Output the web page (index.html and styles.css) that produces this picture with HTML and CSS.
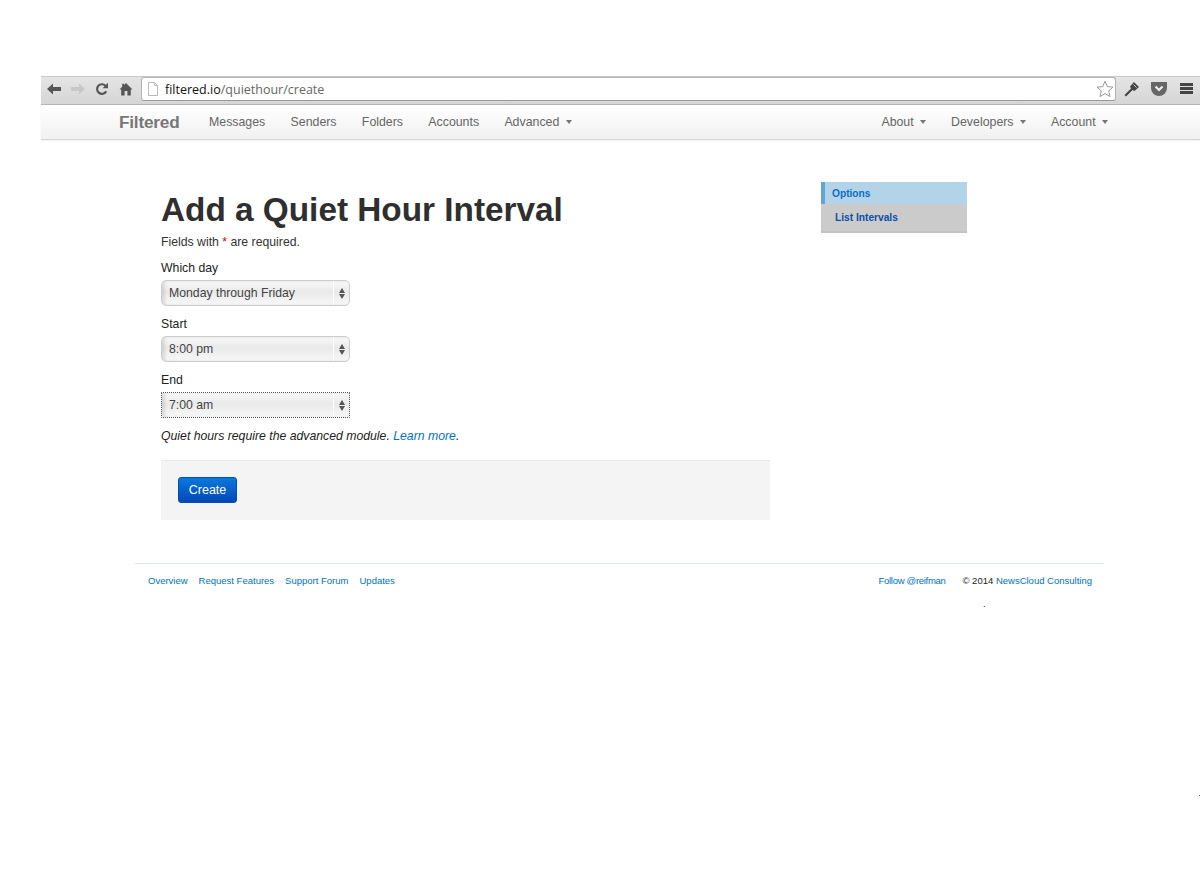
FILE: index.html
```html
<!DOCTYPE html>
<html lang="en">
<head>
    <meta charset="UTF-8">
    <title>Filtered - Add a Quiet Hour Interval</title>
    <link rel="stylesheet" href="styles.css">
</head>
<body>
    <div class="browser">
        <!-- Browser toolbar -->
        <div class="toolbar">
            <div class="tool-btns">
                <svg class="tool-icon" viewBox="0 0 16 16"><path d="M1 8 L7 2.5 V6 H15 V10 H7 V13.5 Z" fill="#555"/></svg>
                <svg class="tool-icon" viewBox="0 0 16 16"><path d="M15 8 L9 2.5 V6 H1 V10 H9 V13.5 Z" fill="#c8c8c8"/></svg>
                <svg class="tool-icon" viewBox="0 0 16 16"><path d="M12.2 10.2 A4.8 4.8 0 1 1 11.6 5" fill="none" stroke="#555" stroke-width="2.2"/><path d="M14 1.8 V7.2 H8.6 Z" fill="#555"/></svg>
                <svg class="tool-icon" viewBox="0 0 16 16"><path d="M8 2 L14.5 8.4 H12.8 V14.5 H9.4 V10 H6.6 V14.5 H3.2 V8.4 H1.5 L4.2 5.7 V2.8 H6 V4 Z" fill="#555"/></svg>
            </div>
            <div class="address-bar">
                <svg class="page-icon" viewBox="0 0 12 14"><path d="M1.5 .5 H7.5 L10.5 3.5 V13.5 H1.5 Z M7.5 .5 V3.5 H10.5" fill="#fff" stroke="#bbb"/></svg>
                <span class="url"><span class="url-host">filtered.io</span>/quiethour/create</span>
                <svg class="star-icon" viewBox="0 0 18 18"><path d="M9 1.2 L11.3 6.6 L17 7.1 L12.7 10.9 L14 16.6 L9 13.6 L4 16.6 L5.3 10.9 L1 7.1 L6.7 6.6 Z" fill="#fff" stroke="#999" stroke-width="1"/></svg>
            </div>
            <div class="ext-btns">
                <svg class="ext-wrench" viewBox="0 0 18 18"><path d="M1.5 15 L8 8.5 L7 6.5 L11 2 L16 7 L11.5 11 L9.5 10 L3 16.5 Z" fill="#444"/><path d="M10.5 4.5 L13.5 7.5" stroke="#ccc" stroke-width="1"/></svg>
                <svg class="ext-pocket" viewBox="0 0 18 16"><path d="M1 1 H17 V7 A8 8 0 0 1 1 7 Z" fill="#666"/><path d="M5.5 5.5 L9 9 L12.5 5.5" fill="none" stroke="#eee" stroke-width="2.2"/></svg>
                <div class="menu-icon"><i></i><i></i><i></i></div>
            </div>
        </div>

        <!-- Site navigation -->
        <nav class="navbar">
            <a class="brand" href="#">Filtered</a>
            <ul class="nav">
                <li><a href="#">Messages</a></li>
                <li><a href="#">Senders</a></li>
                <li><a href="#">Folders</a></li>
                <li><a href="#">Accounts</a></li>
                <li><a href="#">Advanced <b class="caret"></b></a></li>
            </ul>
            <ul class="nav nav-right">
                <li><a href="#">About <b class="caret"></b></a></li>
                <li><a href="#">Developers <b class="caret"></b></a></li>
                <li><a href="#">Account <b class="caret"></b></a></li>
            </ul>
        </nav>

        <div class="content">
            <main class="main-col">
                <h1>Add a Quiet Hour Interval</h1>
                <p class="note">Fields with <span class="required">*</span> are required.</p>
                <form>
                    <label for="day">Which day</label>
                    <div class="select-wrap">
                        <select id="day"><option>Monday through Friday</option></select>
                        <span class="select-arrows"></span>
                    </div>
                    <label for="start">Start</label>
                    <div class="select-wrap">
                        <select id="start"><option>8:00 pm</option></select>
                        <span class="select-arrows"></span>
                    </div>
                    <label for="end">End</label>
                    <div class="select-wrap focused">
                        <select id="end"><option>7:00 am</option></select>
                        <span class="select-arrows"></span>
                    </div>
                    <p class="hint"><em>Quiet hours require the advanced module. <a href="#">Learn more</a>.</em></p>
                    <div class="form-actions">
                        <button type="button" class="btn-primary">Create</button>
                    </div>
                </form>
            </main>
            <aside class="sidebar">
                <div class="side-head">Options</div>
                <a class="side-link" href="#">List Intervals</a>
            </aside>
        </div>

        <footer class="site-footer">
            <div class="footer-links">
                <a href="#">Overview</a>
                <a href="#">Request Features</a>
                <a href="#">Support Forum</a>
                <a href="#">Updates</a>
            </div>
            <div class="footer-right">
                <a class="follow" href="#">Follow @reifman</a>
                <span>© 2014 <a href="#">NewsCloud Consulting</a></span>
            </div>
        </footer>
        <div class="stray-dot">.</div>
    </div>
    <i class="edge-speck"></i>
</body>
</html>
```
FILE: styles.css
```css
* {
  margin: 0;
  padding: 0;
  box-sizing: border-box;
}

body {
  font-family: "Liberation Sans", Arial, sans-serif;
  font-size: 12.25px;
  color: #333;
  background: #fff;
  height: 872px;
  overflow: hidden;
  position: relative;
}

a {
  color: #0072c6;
  text-decoration: none;
}

.browser {
  margin: 76px 0 0 41px;
  padding-top: 0.1px;
}

/* Toolbar */
.toolbar {
  height: 29px;
  display: flex;
  align-items: center;
  padding-bottom: 4px;
  background: linear-gradient(#e4e4e4, #d6d6d6);
  border-top: 1px solid #c9c9c9;
  border-bottom: 1px solid #b5b5b5;
}

.tool-btns {
  display: flex;
  gap: 8px;
  padding-left: 5px;
  width: 100px;
}

.tool-icon {
  width: 16px;
  height: 16px;
}

.address-bar {
  width: 975px;
  height: 24px;
  display: flex;
  align-items: center;
  background: #fff;
  border: 1px solid #b4b4b4;
  border-bottom-color: #999;
  border-radius: 3px;
  padding: 0 1px 0 5px;
}

.page-icon {
  width: 12px;
  height: 14px;
  margin-right: 6px;
}

.url {
  font-family: "Open Sans", "Noto Sans", sans-serif;
  font-size: 12.5px;
  color: #666;
  flex: 1;
  padding-top: 1px;
}

.url-host {
  color: #111;
}

.star-icon {
  width: 18px;
  height: 18px;
}

.ext-btns {
  display: flex;
  align-items: center;
  padding-left: 7px;
  gap: 9px;
}

.ext-wrench {
  width: 18px;
  height: 18px;
}

.ext-pocket {
  width: 18px;
  height: 16px;
}

.menu-icon {
  width: 13px;
  margin-left: 3px;
}

.menu-icon i {
  display: block;
  height: 3px;
  background: #444;
  margin-bottom: 1px;
}

/* Navbar */
.navbar {
  height: 35px;
  display: flex;
  align-items: center;
  padding-left: 78px;
  padding-right: 92px;
  background: linear-gradient(#fff, #f1f1f1);
  border-bottom: 1px solid #d4d4d4;
  box-shadow: 0 1px 2px rgba(0, 0, 0, 0.06);
}

.brand {
  font-size: 17.2px;
  font-weight: bold;
  color: #777;
  letter-spacing: -0.2px;
  width: 90px;
}

.nav {
  display: flex;
  list-style: none;
  gap: 25.3px;
}

.nav a {
  color: #666;
  font-size: 12.35px;
}

.nav-right {
  margin-left: auto;
  gap: 25px;
}

.caret {
  display: inline-block;
  width: 0;
  height: 0;
  margin-left: 3px;
  vertical-align: 2px;
  border-top: 4px solid #777;
  border-left: 3.5px solid transparent;
  border-right: 3.5px solid transparent;
}

/* Content */
.content {
  display: flex;
  padding: 42px 0 0 120px;
}

.main-col {
  width: 609px;
}

h1 {
  font-size: 33.35px;
  line-height: 38px;
  font-weight: bold;
  color: #2f2f2f;
  margin-top: 9px;
}

.note {
  margin-top: 5px;
  line-height: 16px;
}

.required {
  color: #e00000;
}

label {
  display: block;
  margin-top: 9px;
  line-height: 18px;
  color: #222;
}

.select-wrap {
  position: relative;
  width: 189px;
  height: 26px;
  margin-top: 3px;
}

.select-wrap select {
  appearance: none;
  -webkit-appearance: none;
  width: 100%;
  height: 100%;
  padding: 0 7px;
  font-family: inherit;
  font-size: 12.25px;
  color: #444;
  border: 1px solid #ccc;
  border-radius: 5px;
  background: linear-gradient(#f9f9f9, #e9e9e9 45%, #f8f8f8);
  box-shadow: inset 3px 0 3px rgba(0, 0, 0, 0.1);
}

.select-wrap.focused select {
  border: 1px dotted #555;
  border-radius: 1px;
  outline: none;
}

.select-arrows {
  position: absolute;
  top: 1px;
  right: 0;
  bottom: 1px;
  width: 17px;
  border-left: 1px solid #fff;
}

.select-arrows::before,
.select-arrows::after {
  content: "";
  position: absolute;
  left: 5px;
  border-left: 3.5px solid transparent;
  border-right: 3.5px solid transparent;
}

.select-arrows::before {
  top: 7px;
  border-bottom: 5px solid #555;
}

.select-arrows::after {
  top: 13px;
  border-top: 5px solid #555;
}

.hint {
  margin-top: 9px;
  line-height: 18px;
  color: #222;
}

.form-actions {
  margin-top: 15px;
  height: 60px;
  padding: 16px 17px;
  background: #f4f4f4;
  border-top: 1px solid #e8e8e8;
}

.btn-primary {
  display: block;
  width: 59px;
  height: 26px;
  font-family: inherit;
  font-size: 12.5px;
  color: #fff;
  border: 1px solid #0050b0;
  border-radius: 3px;
  background: linear-gradient(#0a78dc, #0048b8);
}

/* Sidebar */
.sidebar {
  width: 146px;
  margin-left: 51px;
  font-size: 10.2px;
  font-weight: bold;
  line-height: 23px;
}

.side-head {
  height: 22px;
  padding-left: 7px;
  color: #0a6fc4;
  background: #b3d4e8;
  border-left: 4px solid #62a6d2;
}

.side-link {
  display: block;
  height: 29px;
  line-height: 27px;
  padding-left: 14px;
  color: #0a50a8;
  background: #cbcbcb;
  border-bottom: 2px solid #c2c2c2;
}

/* Footer */
.site-footer {
  display: flex;
  justify-content: space-between;
  width: 969px;
  margin: 43px 0 0 94px;
  padding: 11px 12px 0 13px;
  border-top: 1px solid #dbe6ec;
  font-size: 9.5px;
  line-height: 12px;
  color: #222;
}

.footer-links {
  display: flex;
  gap: 11px;
}

.footer-right {
  display: flex;
  gap: 17px;
}

.follow {
  letter-spacing: -0.3px;
}

.stray-dot {
  margin: 11px 0 0 942px;
  font-size: 9.5px;
  line-height: 12px;
  color: #222;
}

.edge-speck {
  position: absolute;
  left: 1199px;
  top: 795px;
  width: 1px;
  height: 1px;
  background: #555;
}
```
